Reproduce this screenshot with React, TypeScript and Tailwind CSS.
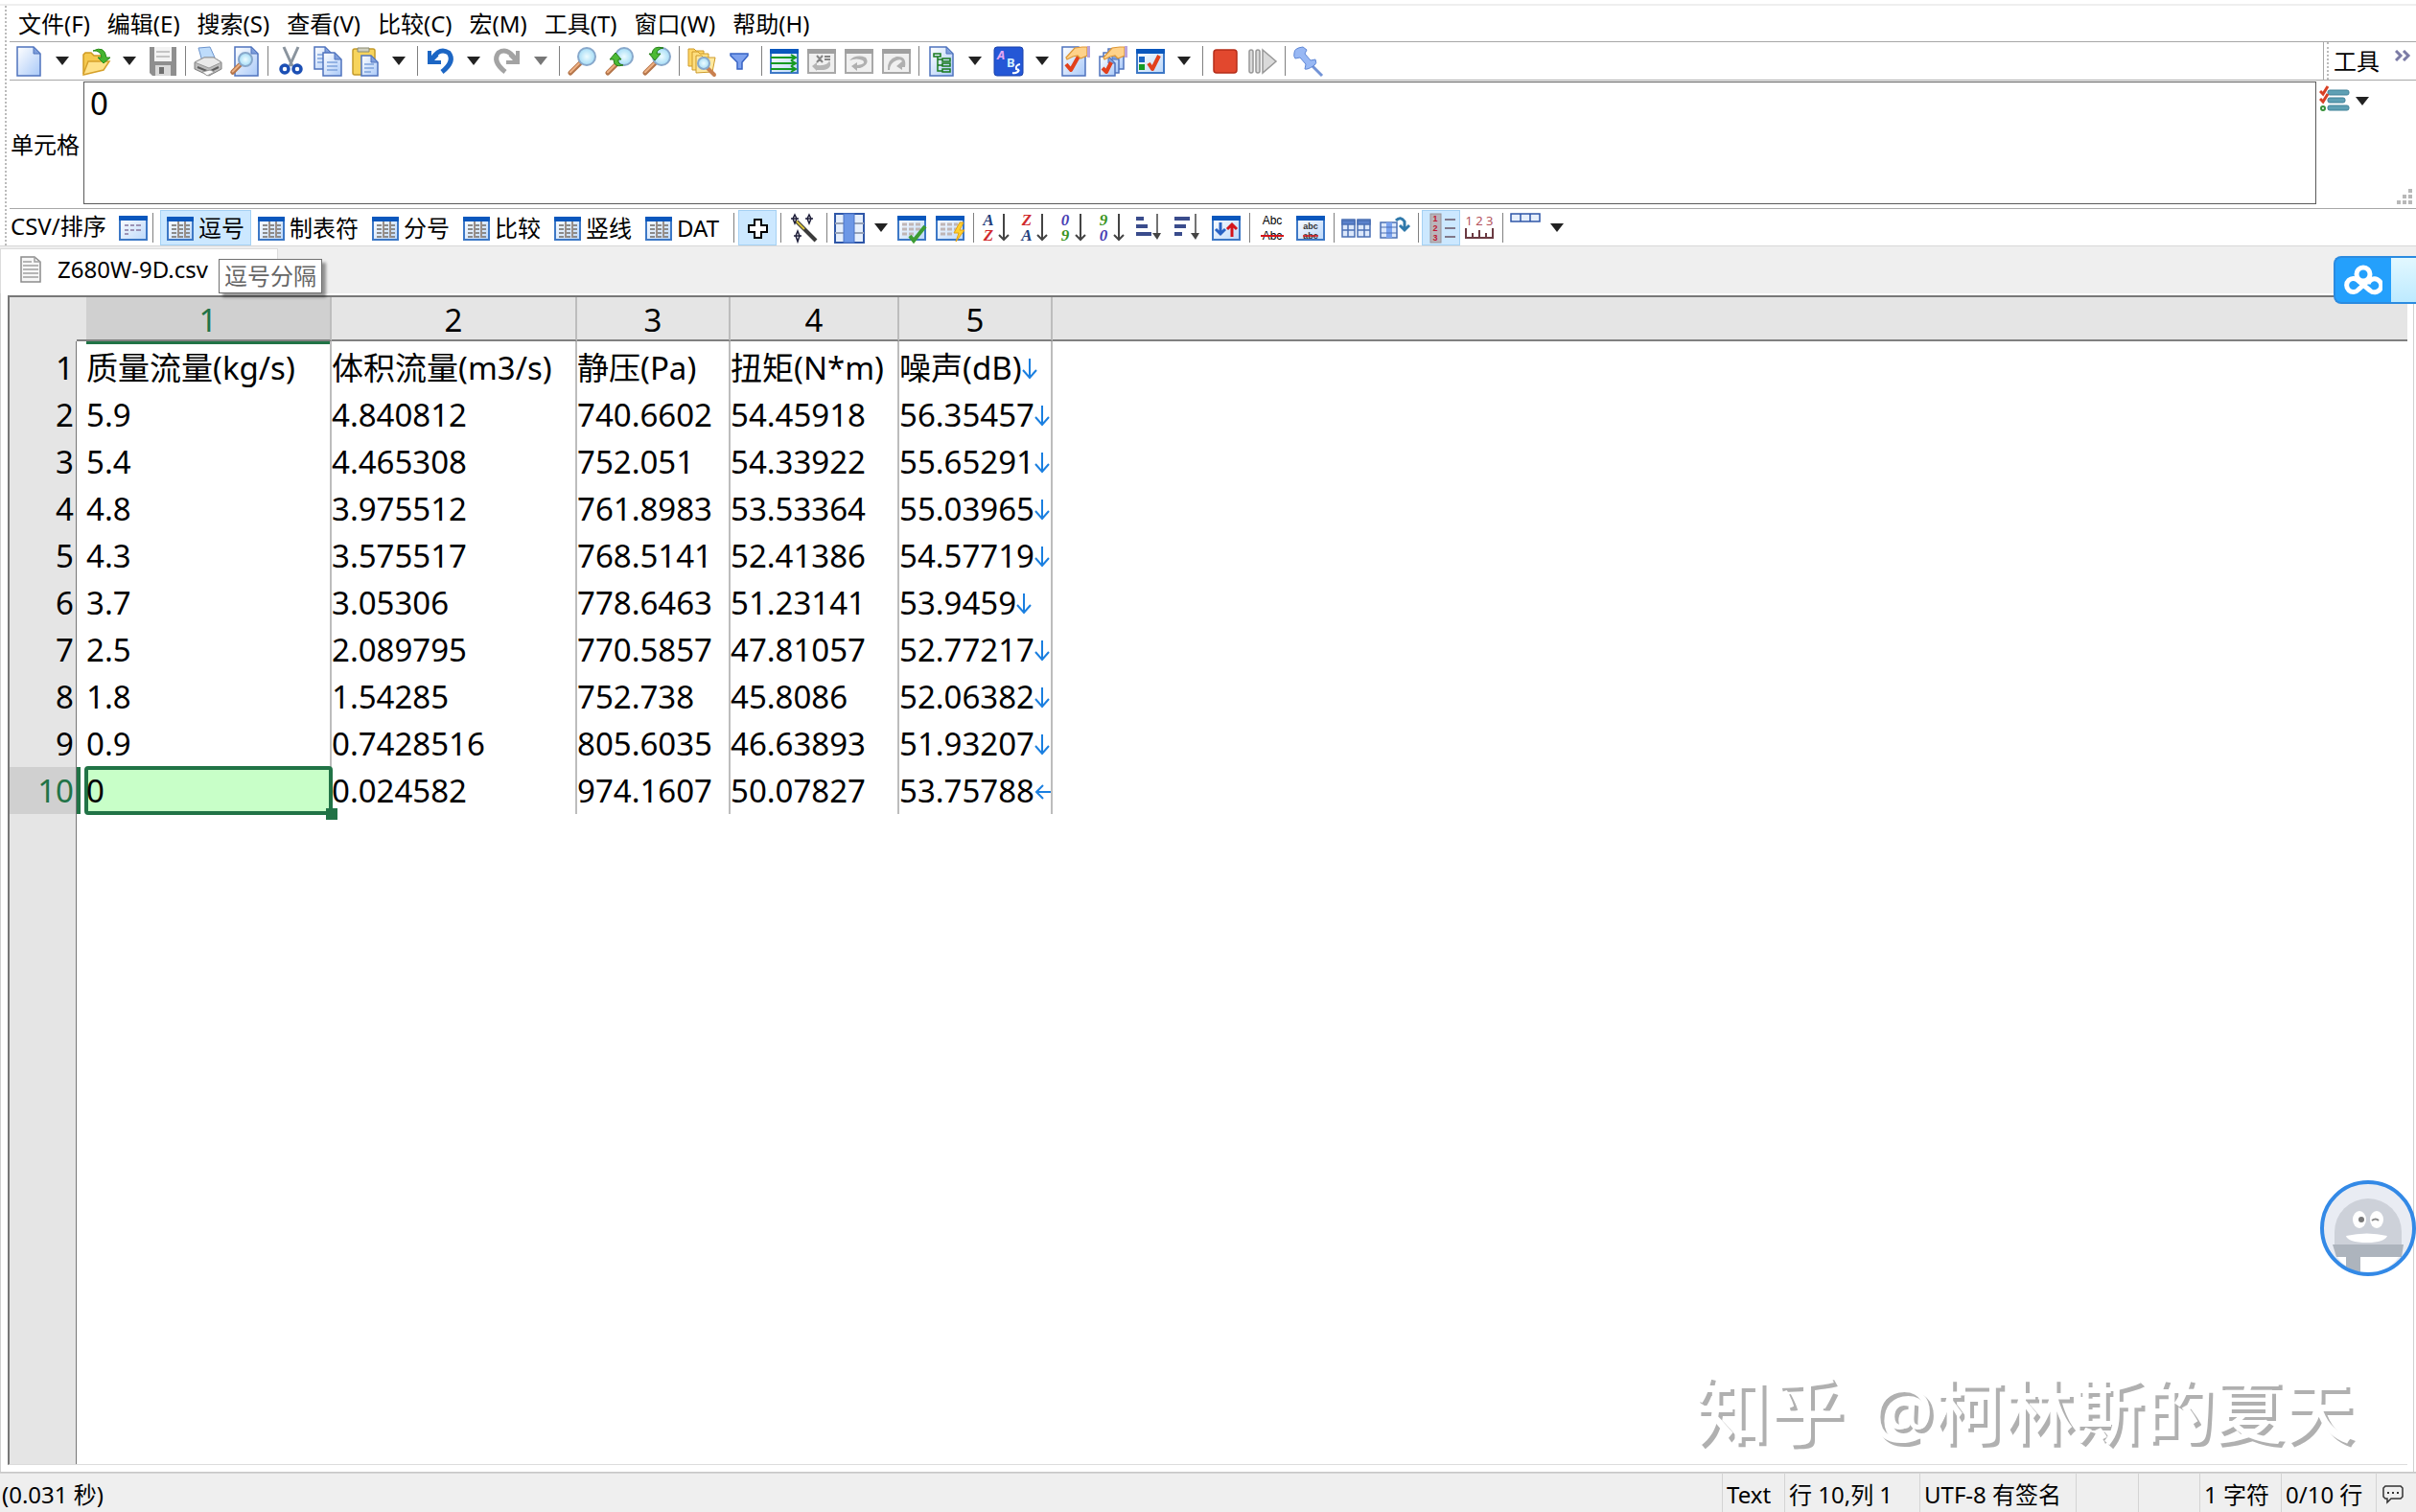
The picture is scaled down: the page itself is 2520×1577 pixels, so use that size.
import type { ReactNode } from "react"

const menus = ["文件(F)", "编辑(E)", "搜索(S)", "查看(V)", "比较(C)", "宏(M)", "工具(T)", "窗口(W)", "帮助(H)"]

const header = ["质量流量(kg/s)", "体积流量(m3/s)", "静压(Pa)", "扭矩(N*m)", "噪声(dB)"]
const rows = [
  ["5.9", "4.840812", "740.6602", "54.45918", "56.35457"],
  ["5.4", "4.465308", "752.051", "54.33922", "55.65291"],
  ["4.8", "3.975512", "761.8983", "53.53364", "55.03965"],
  ["4.3", "3.575517", "768.5141", "52.41386", "54.57719"],
  ["3.7", "3.05306", "778.6463", "51.23141", "53.9459"],
  ["2.5", "2.089795", "770.5857", "47.81057", "52.77217"],
  ["1.8", "1.54285", "752.738", "45.8086", "52.06382"],
  ["0.9", "0.7428516", "805.6035", "46.63893", "51.93207"],
  ["0", "0.024582", "974.1607", "50.07827", "53.75788"],
]

const separators = ["逗号", "制表符", "分号", "比较", "竖线", "DAT"]

function Svg({ children }: { children: ReactNode }) {
  return <svg width="32" height="32" viewBox="0 0 32 32" className="overflow-visible" aria-hidden="true">{children}</svg>
}

// ---- shared icon pieces ----
function Page({ x = 4, y = 1, w = 24, h = 30 }: { x?: number; y?: number; w?: number; h?: number }) {
  return (
    <g>
      <path d={`M${x} ${y}h${w - 7}l7 7v${h - 7}h${-w}z`} fill="url(#paper)" stroke="#4f73bd" strokeWidth="1.5" />
      <path d={`M${x + w - 7} ${y}v7h7z`} fill="#7f9fdc" stroke="#4f73bd" />
    </g>
  )
}

function Win({ gray, children }: { gray?: boolean; children?: ReactNode }) {
  return (
    <g>
      <rect x="2" y="4" width="28" height="24" fill={gray ? "#f0f0f0" : "url(#winbg)"} stroke={gray ? "#a8a8a8" : "#3d78c6"} strokeWidth="2" />
      <rect x="1" y="3" width="30" height="5" rx="1" fill={gray ? "#a0a0a0" : "#0a57bd"} />
      {children}
    </g>
  )
}

function Lens({ cx, cy, r }: { cx: number; cy: number; r: number }) {
  return (
    <g>
      <path d={`M${cx - r * 0.8} ${cy + r * 0.8}L${cx - r * 1.9} ${cy + r * 1.9}`} stroke="#b4754a" strokeWidth="5" strokeLinecap="round" />
      <path d={`M${cx - r * 0.9} ${cy + r * 0.8}L${cx - r * 1.9} ${cy + r * 1.8}`} stroke="#eeb183" strokeWidth="2" strokeLinecap="round" />
      <circle cx={cx} cy={cy} r={r} fill="url(#glass)" stroke="#88a8cb" strokeWidth="2" />
    </g>
  )
}

function Check({ d = "M6 19l5 6 9-16" }: { d?: string }) {
  return <path d={d} fill="none" stroke="#e2401c" strokeWidth="4" strokeLinejoin="round" />
}

function Hand() {
  return (
    <g>
      <path d="M6 12L15 2l8-1h5v9l-7 3-3-3-5 1-6 3z" fill="#ffd28a" stroke="#dd9634" strokeWidth="1.2" />
      <path d="M28 0h3v12h-3z" fill="#b9a3dc" />
    </g>
  )
}

const icons = {
  newFile: <Page />,
  open: (
    <g>
      <path d="M3 29V9l2-2h6l3 3h9v5" fill="#f5c94e" stroke="#cf9a22" strokeWidth="1.5" />
      <path d="M3 29l5-13h22l-6 9-21 5z" fill="#ffe28a" stroke="#d6a12b" strokeWidth="1.5" />
      <path d="M13 5q12-6 14 7h4l-7 6-6-6h4q-1-8-9-7z" fill="#45b52f" stroke="#2b8b1c" />
    </g>
  ),
  save: (
    <g>
      <path d="M2 1h28v30H5l-3-3z" fill="#8f8f8f" />
      <rect x="7" y="1" width="18" height="15" fill="#f3f3f3" />
      <path d="M9 6h14M9 11h14" stroke="#c4c4c4" strokeWidth="2" />
      <rect x="8" y="20" width="16" height="11" fill="#d9d9d9" />
      <path d="M12 22h5v7h-5z" fill="#707070" />
    </g>
  ),
  print: (
    <g>
      <path d="M6 2l12-1 5 11-13 4z" fill="#bedcfb" stroke="#6b93cc" />
      <path d="M2 17l10-5h10l8 5v7l-13 7-15-7z" fill="#bcbcbc" stroke="#7e7e7e" />
      <path d="M2 17l15 6 13-6-8-5H12z" fill="#eaeaea" stroke="#999" />
      <path d="M5 22l12 5 10-5" stroke="#5b5b5b" strokeWidth="2" fill="none" />
      <path d="M10 27l5 4 8-4-5-2z" fill="#fafafa" stroke="#999" />
    </g>
  ),
  preview: <g><Page x={5} /><Lens cx={16} cy={14} r={7} /></g>,
  cut: (
    <g>
      <path d="M9 1l9 20M24 1l-9 20" stroke="#8a949e" strokeWidth="3" />
      <circle cx="10" cy="24" r="4" fill="#fff" stroke="#1c4fb4" strokeWidth="3.5" />
      <circle cx="23" cy="24" r="4" fill="#fff" stroke="#1c4fb4" strokeWidth="3.5" />
    </g>
  ),
  copy: (
    <g>
      <Page x={2} y={1} w={18} h={23} />
      <path d="M5 9h8M5 13h8M5 17h6" stroke="#7da3dc" strokeWidth="1.5" />
      <Page x={11} y={7} w={19} h={24} />
      <path d="M15 17h11M15 21h11M15 25h11" stroke="#7da3dc" strokeWidth="1.5" />
    </g>
  ),
  paste: (
    <g>
      <rect x="3" y="3" width="23" height="27" rx="2" fill="#f7d45c" stroke="#c39a2a" strokeWidth="1.5" />
      <path d="M8 6V2h12v4z" fill="#d0d0c0" stroke="#89896e" />
      <Page x={12} y={10} w={17} h={21} />
      <path d="M15 19h10M15 23h10M15 27h7" stroke="#7da3dc" strokeWidth="1.5" />
    </g>
  ),
  undo: (
    <g fill="none" stroke="#1c66c4" strokeWidth="5">
      <path d="M8 13Q16 1 25 7q7 9-7 20" />
      <path d="M5 5v12h12" strokeWidth="4" />
      <path d="M5 17l8-8" strokeWidth="4" />
    </g>
  ),
  redo: (
    <g fill="none" stroke="#a3a3a3" strokeWidth="5">
      <path d="M24 13Q16 1 7 7q-7 9 7 20" />
      <path d="M27 5v12H15" strokeWidth="4" />
      <path d="M27 17l-8-8" strokeWidth="4" />
    </g>
  ),
  find: <Lens cx={21} cy={11} r={9} />,
  findPrev: <g><Lens cx={21} cy={11} r={9} /><path d="M6 14l6-7 6 7h-3q-1 5 5 6-10 3-10-6z" fill="#4cba35" stroke="#237d17" /></g>,
  findNext: <g><Lens cx={21} cy={11} r={9} /><path d="M8 8h3q1-9 12-6-7 1-7 6h4l-6 7z" fill="#4cba35" stroke="#237d17" /></g>,
  findInFiles: (
    <g>
      <path d="M2 21V3h6l2 2h8v16z" fill="#ffd768" stroke="#cd9a28" />
      <path d="M6 25V6h6l2 2h9v17z" fill="#ffdf80" stroke="#cd9a28" />
      <path d="M10 28V10h6l2 2h12l-3 15z" fill="#ffe9a0" stroke="#cd9a28" />
      <path d="M22 23l7 7" stroke="#c9804f" strokeWidth="4" strokeLinecap="round" />
      <circle cx="18" cy="18" r="6" fill="url(#glass)" stroke="#88a8cb" strokeWidth="2" />
    </g>
  ),
  filter: <path d="M7 8h18v2l-6 7v7h-5v-7L7 10z" fill="#7ea2ee" stroke="#3763c4" strokeWidth="1.5" />,
  jump: <Win><path d="M2 12h26M2 18h26M2 24h26M23 9l5 3-5 3M23 15l5 3-5 3M23 21l5 3-5 3" fill="none" stroke="#159a22" strokeWidth="2" /></Win>,
  grayClear: <Win gray><path d="M11 10l6 7M17 10l-6 7M19 11h6M19 14h6" stroke="#858585" strokeWidth="2" /><path d="M6 21l5-4v3q12 1 13-5 4 8-6 10h-7v1z" fill="#b5b5b5" /></Win>,
  grayBack: <Win gray><path d="M6 15q7-7 17-3 5 7-6 11h-3v3l-6-5 6-4v3q10-1 6-5-6-3-14 0z" fill="#b0b0b0" /></Win>,
  grayFwd: <Win gray><path d="M7 25q-1-11 9-14 11-1 9 11h-3v3l-6-4 6-5q-1-3-6-1-7 3-7 10z" fill="#b0b0b0" /></Win>,
  tree: (
    <g>
      <Page />
      <path d="M8 8h7v3H8zM17 13h8v3h-8zM17 18h8v3h-8zM17 24h8v3h-8zM12 11v15h5M12 14h5M12 20h5" fill="none" stroke="#177a1c" strokeWidth="1.5" />
    </g>
  ),
  abc: (
    <g>
      <rect x="1" y="1" width="30" height="30" rx="3" fill="#2457d6" stroke="#1a42aa" />
      <text x="4" y="14" fontSize="13" fontStyle="italic" fontWeight="bold" fill="#e9a9f2">A</text>
      <text x="14" y="22" fontSize="13" fontWeight="bold" fill="#d4f1ff">B</text>
      <path d="M28 19q-5 1-4 5l3 1M27 25q-2 4-7 3" stroke="#fff" strokeWidth="2" fill="none" />
    </g>
  ),
  checkHand: <g><Page x={2} /><Check /><Hand /></g>,
  checkHands: <g><Page x={11} y={3} w={16} h={21} /><Page x={6} y={7} w={16} h={21} /><Page x={2} y={11} w={16} h={20} /><Check d="M5 23l4 4 5-10" /><Hand /></g>,
  options: <Win><path d="M4 11h6v6H4z" fill="#1c66c4" /><path d="M4 19h6v6H4z" fill="#159a22" /><Check d="M14 18l4 6 7-14" /></Win>,
  stop: <rect x="4" y="4" width="24" height="24" rx="3" fill="#e2482e" stroke="#b52c19" strokeWidth="1.5" />,
  play: <g fill="#dadada" stroke="#989898" strokeWidth="1.5"><rect x="2" y="4" width="4" height="24" rx="2" /><rect x="9" y="4" width="4" height="24" rx="2" /><path d="M16 4l14 12-14 12z" /></g>,
  pin: (
    <g>
      <path d="M18 18l13 13" stroke="#7293d6" strokeWidth="3" />
      <path d="M2 7q0-5 9-6l4 3-2 4 6 7 5-1q2 4-1 6-7 5-10 4l1-5-6-7-5 1q-2-2-1-6z" fill="#98b8f4" stroke="#5f87d6" />
    </g>
  ),
  list: <Win><path d="M7 13h4M13 13h4M19 13h5M7 18h4M13 18h4M19 18h5M7 22h4" stroke="#9c93b5" strokeWidth="2" /></Win>,
  table: (
    <g>
      <rect x="3" y="5" width="26" height="23" fill="url(#winbg)" stroke="#3d78c6" strokeWidth="2" />
      <rect x="2" y="4" width="28" height="5" rx="1" fill="#0a57bd" />
      <path d="M7 13h5M7 17h5M7 21h5M7 25h5M14 13h5M14 17h5M14 21h5M14 25h5M21 13h5M21 17h5M21 21h5M21 25h5" stroke="#8a8a8a" strokeWidth="2" />
      <path d="M14 9v17M21 9v17" stroke="#9a8f88" strokeWidth="2" />
    </g>
  ),
  plus: <path d="M13 7h7v6h6v7h-6v6h-7v-6H7v-7h6z" fill="#fff" stroke="#000" strokeWidth="2" />,
  wand: (
    <g>
      <path d="M9 9l20 20" stroke="#3a3a3a" strokeWidth="4" />
      <path d="M8 8l9 9" stroke="#d8c23a" strokeWidth="2" />
      <path d="M7 2l2 4-2 5-2-5zM3 6h8M22 2l2 4-2 5-2-5zM18 6h8M10 19l2 5-2 6-2-6zM6 24h8" stroke="#1e1e3a" strokeWidth="1.5" fill="#fff" />
    </g>
  ),
  columns: (
    <g>
      <rect x="1" y="1" width="30" height="30" fill="#e6effc" stroke="#2f57a8" strokeWidth="2" />
      <path d="M1 11h30M1 21h30" stroke="#96a2b8" strokeWidth="2" />
      <rect x="10" y="1" width="11" height="30" fill="#6c97e6" stroke="#4a74c8" />
    </g>
  ),
  tableOk: <Win><path d="M6 12h20M6 17h20M6 22h14" stroke="#c0b6b6" strokeWidth="3" strokeDasharray="5 2" /><path d="M14 24l4 5L30 14" fill="none" stroke="#3c9c33" strokeWidth="4" /></Win>,
  tableFlash: <Win><path d="M6 12h18M6 17h18M6 22h14" stroke="#c0b6b6" strokeWidth="3" strokeDasharray="5 2" /><path d="M26 10l-6 11h5l-3 9 9-12h-5l4-8z" fill="#ffd02c" stroke="#e3a215" /></Win>,
  sortAsc: <g><path d="M2 6h8M2 14h12M2 22h16" stroke="#3a4c8c" strokeWidth="4" /><path d="M24 1v22" stroke="#444" strokeWidth="1.5" /><path d="M19 21h9l-4 7z" fill="#444" /></g>,
  sortDesc: <g><path d="M2 6h16M2 14h12M2 22h8" stroke="#3a4c8c" strokeWidth="4" /><path d="M24 1v22" stroke="#444" strokeWidth="1.5" /><path d="M19 21h9l-4 7z" fill="#444" /></g>,
  sortWin: <Win><path d="M10 10v12M5 17l5 5 5-5" fill="none" stroke="#2862c4" strokeWidth="3" /><path d="M22 25V12M17 17l5-5 5 5" fill="none" stroke="#d4141a" strokeWidth="3" /></Win>,
  abcStrike: (
    <g className="font-['Liberation_Sans',sans-serif]">
      <text x="16" y="12" fontSize="12" textAnchor="middle">Abc</text>
      <text x="16" y="28" fontSize="12" textAnchor="middle">Abc</text>
      <path d="M4 24h24" stroke="#d4141a" strokeWidth="2" />
    </g>
  ),
  abcWin: (
    <g className="font-['Liberation_Sans',sans-serif]">
      <Win>
        <text x="16" y="17" fontSize="9" textAnchor="middle" fontWeight="bold" fill="#333">abc</text>
        <text x="16" y="27" fontSize="9" textAnchor="middle" fontWeight="bold" fill="#333">abc</text>
        <path d="M8 24h16" stroke="#d4141a" strokeWidth="1.5" />
      </Win>
    </g>
  ),
  twoTables: (
    <g fill="#dce8fb" stroke="#4a6fb4" strokeWidth="1.5">
      <path d="M1 7h13v18H1zM17 7h13v18H17z" />
      <path d="M1 8h13v4H1zM17 8h13v4H17z" fill="#5b82cc" />
      <path d="M1 18h13M7 12v13M17 18h13M24 12v13" />
    </g>
  ),
  tableTurn: (
    <g>
      <path d="M1 10h17v16H1z" fill="#dce8fb" stroke="#4a6fb4" strokeWidth="1.5" />
      <path d="M7 10h6v16H7z" fill="#7aa2ee" />
      <path d="M1 15h17M1 21h17" stroke="#4a6fb4" />
      <path d="M17 8q5-5 9 1v7M21 13l5 5 5-5" fill="none" stroke="#2f78aa" strokeWidth="3" />
    </g>
  ),
  lineNo: (
    <g className="font-['Liberation_Sans',sans-serif]">
      <rect x="5" y="1" width="11" height="30" fill="#b9b4ba" stroke="#9a9499" />
      <text x="10" y="9" fontSize="9" textAnchor="middle" fontWeight="bold" fill="#c01632">1</text>
      <text x="10" y="19" fontSize="9" textAnchor="middle" fontWeight="bold" fill="#c01632">2</text>
      <text x="10" y="29" fontSize="9" textAnchor="middle" fontWeight="bold" fill="#c01632">3</text>
      <path d="M20 7h11M20 16h11M20 25h11" stroke="#80788a" strokeWidth="2" />
    </g>
  ),
  ruler: (
    <g>
      <text x="16" y="13" fontSize="13" textAnchor="middle" fill="#b4545c">1 2 3</text>
      <path d="M2 16v10h28V16M9 21v5M16 18v8M23 21v5" fill="none" stroke="#6b3a42" strokeWidth="2" />
    </g>
  ),
  strip: <g fill="#e6effc" stroke="#2f57a8" strokeWidth="1.5"><path d="M1 1h30v8H1zM11 1v8M21 1v8" /></g>,
}

type IconName = keyof typeof icons

function Sort({ a, b, ca, cb }: { a: string; b: string; ca: string; cb: string }) {
  return (
    <Svg>
      <g className="font-['Liberation_Serif',serif]" fontSize="17" fontWeight="bold" fontStyle="italic" textAnchor="middle">
        <text x="8" y="13" fill={ca}>{a}</text>
        <text x="8" y="29" fill={cb}>{b}</text>
      </g>
      <path d="M24 1v26M19 23l5 5 5-5" fill="none" stroke="#444" strokeWidth="2" />
    </Svg>
  )
}

function Btn({ icon }: { icon: IconName }) {
  return <button type="button" aria-label={icon} className="w-[39px] h-full flex items-center justify-center"><Svg>{icons[icon]}</Svg></button>
}

function Btn2({ label, active, children }: { label: string; active?: boolean; children: ReactNode }) {
  return (
    <button type="button" aria-label={label} className={`w-10 h-full flex items-center justify-center ${active ? "bg-[#cce8ff] outline outline-[#a5d1f3] -outline-offset-1" : ""}`}>
      {children}
    </button>
  )
}

function Caret({ gray, narrow }: { gray?: boolean; narrow?: boolean }) {
  return (
    <button type="button" aria-label="更多" className={`h-full flex items-center justify-center ${narrow ? "w-[25px]" : "w-[31px]"}`}>
      <svg width="14" height="9" viewBox="0 0 14 9" aria-hidden="true"><path d="M0 0h14L7 9z" fill={gray ? "#777" : "#222"} /></svg>
    </button>
  )
}

function Sep() {
  return <div className="w-2 h-full py-[3px] flex justify-center"><div className="w-px bg-[#808080]" /></div>
}

function Eol({ last }: { last?: boolean }) {
  return (
    <svg width="17" height="22" viewBox="0 0 17 22" className="inline-block align-baseline" aria-hidden="true">
      <path d={last ? "M17 11H2M9 4l-7 7 7 7" : "M8 0v20M1 12l7 8 7-8"} fill="none" stroke="#1a7fe0" strokeWidth="2" />
    </svg>
  )
}

export default function App() {
  return (
    <div className="min-h-screen flex flex-col bg-white text-black text-[24px] leading-8 font-['Noto_Sans','Noto_Sans_CJK_SC',sans-serif] whitespace-nowrap overflow-hidden">
      <svg width="0" height="0" className="absolute" aria-hidden="true">
        <defs>
          <linearGradient id="paper" x1="0" y1="0" x2="1" y2="1"><stop offset="0" stopColor="#fff" /><stop offset="1" stopColor="#a9c9f8" /></linearGradient>
          <linearGradient id="winbg" x1="0" y1="0" x2="1" y2="1"><stop offset="0" stopColor="#fff" /><stop offset="1" stopColor="#bcd8fa" /></linearGradient>
          <radialGradient id="glass"><stop offset="0" stopColor="#eefcff" /><stop offset="1" stopColor="#a4dcf6" /></radialGradient>
        </defs>
      </svg>

      <div className="h-1" />
      <div className="border-t-2 border-[#eeeeee] flex">
        <div className="w-[7px] flex justify-end mr-[3px]"><div className="border-l-2 border-dotted border-[#bbb]" /></div>
        <div className="flex-1 min-w-0">
          {/* menu bar */}
          <nav className="h-[37px] flex items-center gap-[18px] pl-[9px]">
            {menus.map(m => <button key={m} type="button">{m}</button>)}
          </nav>

          {/* main toolbar */}
          <div className="h-10 border-t border-[#a8a8a8] flex">
            <div className="flex flex-1 py-px">
              <Btn icon="newFile" /><Caret /><Btn icon="open" /><Caret /><Btn icon="save" /><Sep />
              <Btn icon="print" /><Btn icon="preview" /><Sep />
              <Btn icon="cut" /><Btn icon="copy" /><Btn icon="paste" /><Caret /><Sep />
              <Btn icon="undo" /><Caret /><Btn icon="redo" /><Caret gray /><Sep />
              <Btn icon="find" /><Btn icon="findPrev" /><Btn icon="findNext" /><Sep />
              <Btn icon="findInFiles" /><Btn icon="filter" /><Sep />
              <Btn icon="jump" /><Btn icon="grayClear" /><Btn icon="grayBack" /><Btn icon="grayFwd" /><Sep />
              <Btn icon="tree" /><Caret /><Btn icon="abc" /><Caret />
              <Btn icon="checkHand" /><Btn icon="checkHands" /><Btn icon="options" /><Caret /><Sep />
              <Btn icon="stop" /><Btn icon="play" /><Sep /><Btn icon="pin" />
            </div>
            <div className="w-[97px] border-l border-[#a8a8a8] flex pl-[3px]">
              <div className="border-l-2 border-dotted border-[#bbb] mr-[5px]" />
              <button type="button" className="pt-px">工具</button>
              <svg width="18" height="12" viewBox="0 0 18 12" className="ml-4 mt-2" aria-label="更多"><path d="M1 1l5 5-5 5M9 1l5 5-5 5" fill="none" stroke="#7b7ba5" strokeWidth="3" /></svg>
            </div>
          </div>

          {/* cell editor */}
          <div className="border-t border-[#a8a8a8] pt-px pb-1 flex">
            <label htmlFor="cell" className="w-[77px] flex items-center pl-px pt-1">单元格</label>
            <textarea id="cell" defaultValue="0" className="block flex-1 h-[128px] resize-none border border-[#5a5a5a] bg-white px-[6px] text-[33px] leading-[44px] outline-none" />
            <div className="w-[104px] flex flex-col justify-between pt-1">
              <div className="flex pl-[3px]">
                <svg width="32" height="32" viewBox="0 0 32 32" aria-hidden="true">
                  <g fill="#5fa0b4" stroke="#3f8198"><rect x="9" y="5" width="22" height="5" rx="2" /><rect x="9" y="13" width="18" height="5" rx="2" /><rect x="9" y="21" width="22" height="5" rx="2" /></g>
                  <path d="M1 6l3 3 5-8M1 14l3 3 5-8" stroke="#d84025" strokeWidth="3" fill="none" />
                  <circle cx="4" cy="24" r="2" fill="#fff" stroke="#37913a" strokeWidth="2" />
                </svg>
                <div className="h-8"><Caret narrow /></div>
              </div>
              <svg width="16" height="16" viewBox="0 0 16 16" className="self-end mr-1" aria-hidden="true"><path d="M12 0h4v4h-4zM6 6h4v4H6zM12 6h4v4h-4zM0 12h4v4H0zM6 12h4v4H6zM12 12h4v4h-4z" fill="#b8b8b8" /></svg>
            </div>
          </div>

          {/* csv toolbar */}
          <div className="h-[39px] border-t border-[#a8a8a8] flex pt-px">
            <span className="w-[109px] pl-px pt-px">CSV/排序</span>
            <Btn2 label="列表"><Svg>{icons.list}</Svg></Btn2>
            <div className="-ml-1 mr-1"><Sep /></div>
            {separators.map((s, i) => (
              <button key={s} type="button" className={`h-full pl-[5px] pr-[7px] flex items-center gap-[3px] ${i === 0 ? "bg-[#cce8ff] outline outline-[#a5d1f3] -outline-offset-1" : ""}`}>
                <Svg>{icons.table}</Svg>{s}
              </button>
            ))}
            <div className="ml-1 mr-px"><Sep /></div>
            <Btn2 label="加号" active><Svg>{icons.plus}</Svg></Btn2><Sep />
            <Btn2 label="魔棒"><Svg>{icons.wand}</Svg></Btn2><Sep />
            <Btn2 label="列"><Svg>{icons.columns}</Svg></Btn2><Caret narrow />
            <Btn2 label="检查"><Svg>{icons.tableOk}</Svg></Btn2>
            <Btn2 label="转换"><Svg>{icons.tableFlash}</Svg></Btn2><Sep />
            <Btn2 label="A-Z"><Sort a="A" b="Z" ca="#24407c" cb="#d02a2e" /></Btn2>
            <Btn2 label="Z-A"><Sort a="Z" b="A" ca="#d02a2e" cb="#24407c" /></Btn2>
            <Btn2 label="0-9"><Sort a="0" b="9" ca="#4a3fb4" cb="#3a9422" /></Btn2>
            <Btn2 label="9-0"><Sort a="9" b="0" ca="#3a9422" cb="#4a3fb4" /></Btn2>
            <Btn2 label="升序"><Svg>{icons.sortAsc}</Svg></Btn2>
            <Btn2 label="降序"><Svg>{icons.sortDesc}</Svg></Btn2>
            <Btn2 label="排序"><Svg>{icons.sortWin}</Svg></Btn2><Sep />
            <Btn2 label="去重"><Svg>{icons.abcStrike}</Svg></Btn2>
            <Btn2 label="去重选项"><Svg>{icons.abcWin}</Svg></Btn2><Sep />
            <Btn2 label="拆分"><Svg>{icons.twoTables}</Svg></Btn2>
            <Btn2 label="转置"><Svg>{icons.tableTurn}</Svg></Btn2><Sep />
            <Btn2 label="行号" active><Svg>{icons.lineNo}</Svg></Btn2>
            <Btn2 label="标尺"><Svg>{icons.ruler}</Svg></Btn2><Sep />
            <Btn2 label="标题行"><Svg>{icons.strip}</Svg></Btn2><Caret narrow />
          </div>
        </div>
      </div>

      {/* tabs */}
      <div className="relative h-[50px] bg-[#efefef] border-t border-[#d8d8d8] pt-[2px] flex">
        <button type="button" className="w-[290px] bg-white border-l border-t border-r border-[#dcdcdc] flex items-center pl-5 pb-[5px]">
          <svg width="22" height="28" viewBox="0 0 22 28" className="mr-[17px]" aria-hidden="true">
            <path d="M1 1h14l6 5v21H1z" fill="#f7f7f7" stroke="#8c8c8c" strokeWidth="1.5" />
            <path d="M15 1v5h6M3 6h9M3 10h16M3 14h16M3 18h16M3 22h16" fill="none" stroke="#a0a0a0" strokeWidth="1.5" />
          </svg>
          Z680W-9D.csv
        </button>
        <div role="tooltip" className="absolute z-20 left-[228px] top-[13px] h-[36px] px-[5px] pt-px border border-[#707070] bg-white text-[#666] shadow-[4px_4px_3px_rgba(0,0,0,0.4)]">逗号分隔</div>
        <div className="absolute z-20 right-0 top-[10px] w-[86px] h-[50px] rounded-l-lg border-2 border-r-0 border-[#2b8be0] bg-[#24a0fc] flex overflow-hidden">
          <div className="w-[58px] flex items-center justify-center">
            <svg width="40" height="32" viewBox="0 0 40 32" fill="none" stroke="#fff" strokeWidth="5" aria-hidden="true">
              <circle cx="20" cy="10" r="7" /><path d="M25 20a7 7 0 1 1 2 7L15 17a7 7 0 1 0 0 9l10-9" />
            </svg>
          </div>
          <div className="flex-1 bg-linear-to-b from-[#e2f8ff] to-[#bdeaff]" />
        </div>
      </div>

      {/* sheet */}
      <main className="relative flex-1 flex flex-col border-x border-[#d0d0d0] mr-[2px] pl-[7px] pr-[6px] pt-[2px] pb-[7px]">
        <div className="flex-1 flex flex-col border-t-2 border-l-2 border-t-[#777] border-l-[#777] border-b border-b-[#dcdcdc]">
          <table className="table-fixed w-full border-separate border-spacing-0 text-[33px] leading-[44px]">
            <colgroup>
              <col className="w-[70px]" /><col className="w-[10px]" /><col className="w-[256px]" /><col className="w-[256px]" />
              <col className="w-[160px]" /><col className="w-[176px]" /><col className="w-[160px]" /><col />
            </colgroup>
            <thead>
              <tr className="h-[46px] bg-[#e5e5e5]">
                <th className="p-0" />
                <th className="p-0 border-b-2 border-[#808080]" />
                {[1, 2, 3, 4, 5].map(n => (
                  <th key={n} className={`p-0 font-normal border-b-2 border-r-2 border-b-[#808080] border-r-[#bdbdbd] ${n === 1 ? "bg-[#d0d0d0] text-[#217346]" : ""}`}>
                    <div className="h-[44px] leading-[48px]">{n}</div>
                  </th>
                ))}
                <th className="p-0 border-b-2 border-[#808080]" />
              </tr>
            </thead>
            <tbody>
              <tr aria-hidden="true" className="h-[3px]">
                <td className="p-0 bg-[#e5e5e5] border-r border-[#777]" />
                <td className="p-0" />
                <td className="p-0 bg-[#217346] border-r-2 border-[#bdbdbd]" />
                {[2, 3, 4, 5].map(n => <td key={n} className="p-0 border-r-2 border-[#bdbdbd]" />)}
                <td className="p-0" />
              </tr>
              {[header, ...rows].map((r, i) => {
                const current = i === 9
                return (
                  <tr key={i} className="h-[49px]">
                    <th className={`p-0 pr-[2px] text-right font-normal border-r border-[#777] ${current ? "bg-[#d0d0d0] text-[#217346]" : "bg-[#e5e5e5]"}`}>{i + 1}</th>
                    <td className="p-0">{current && <div className="w-1 h-[49px] bg-[#217346]" />}</td>
                    {r.map((v, j) => (
                      <td key={j} className="relative p-0 border-r-2 border-[#bdbdbd]">
                        {current && j === 0 && (
                          <>
                            <div className="absolute -inset-x-[2px] -inset-y-px -right-[3px] border-4 border-[#217346] rounded-sm bg-[#c8ffc8]" />
                            <div className="absolute -right-2 -bottom-[6px] z-10 size-3 bg-[#217346]" />
                          </>
                        )}
                        <span className="relative">{v}</span>
                        {j === 4 && <Eol last={current} />}
                      </td>
                    ))}
                    <td className="p-0" />
                  </tr>
                )
              })}
            </tbody>
          </table>
          <div className="flex-1 w-[70px] bg-[#e5e5e5] border-r border-[#777]" />
        </div>

        <div className="absolute right-[62px] bottom-[14px] flex items-center gap-[28px] text-[73px] leading-[100px] font-medium text-white [text-shadow:4px_4px_0_#b0b0b0]">
          <span className="text-[78px]">知乎</span><span>@柯林斯的夏天</span>
        </div>
        <button type="button" aria-label="助手" className="absolute -right-[3px] bottom-[204px]">
          <svg width="100" height="100" viewBox="0 0 100 100" aria-hidden="true">
            <circle cx="50" cy="50" r="48" fill="#e9ecf3" />
            <path d="M15 68V54a35 35 0 0 1 70 0v14z" fill="#cdd1d9" />
            <path d="M13 67h74l-2 13H17z" fill="#adb4bd" />
            <path d="M18 80h64q-12 16-32 17-22-2-32-17z" fill="#fff" />
            <path d="M27 80h15v16q-8-1-15-6z" fill="#adb4bd" />
            <ellipse cx="41" cy="41" rx="7" ry="9" fill="#fff" /><ellipse cx="59" cy="41" rx="7" ry="9" fill="#fff" />
            <circle cx="43" cy="41" r="3" fill="#777" /><path d="M54 42q4-3 7 0" stroke="#888" strokeWidth="2" fill="none" />
            <path d="M27 58q22-5 43 0-3 7-21 7-20 0-22-7z" fill="#fff" />
            <circle cx="50" cy="50" r="48" fill="none" stroke="#3389e6" strokeWidth="4" />
          </svg>
        </button>
      </main>

      {/* status bar */}
      <footer className="h-[42px] border-t border-[#c8c8c8] bg-[#efefef] flex">
        <div className="flex-1 pt-[6px] pl-[2px] border-t border-[#d4d4d4]">(0.031 秒)</div>
        <div className="w-[65px] pt-[6px] pl-1 border-l border-t border-[#d4d4d4]">Text</div>
        <div className="w-[141px] pt-[6px] pl-1 border-l border-t border-[#d4d4d4]">行 10,列 1</div>
        <div className="w-[163px] pt-[6px] pl-1 border-l border-t border-[#d4d4d4]">UTF-8 有签名</div>
        <div className="w-[65px] border-l border-t border-[#d4d4d4]" />
        <div className="w-[64px] border-l border-t border-[#d4d4d4]" />
        <div className="w-[85px] pt-[6px] pl-1 border-l border-t border-[#d4d4d4]">1 字符</div>
        <div className="w-[99px] pt-[6px] pl-1 border-l border-t border-[#d4d4d4]">0/10 行</div>
        <div className="w-[42px] pt-[12px] pl-[6px] border-l border-t border-[#d4d4d4]">
          <svg width="22" height="20" viewBox="0 0 22 20" aria-hidden="true">
            <path d="M3 1h16l2 2v9l-2 2H9l-4 4v-4H3l-2-2V3z" fill="none" stroke="#333" strokeWidth="1.5" />
            <path d="M5 8h2M10 8h2M15 8h2" stroke="#333" strokeWidth="2" />
          </svg>
        </div>
      </footer>
    </div>
  )
}
